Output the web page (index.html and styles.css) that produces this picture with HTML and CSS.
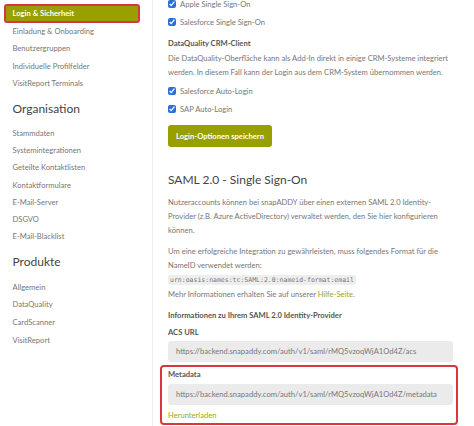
FILE: index.html
```html
<!DOCTYPE html>
<html lang="de">
<head>
    <meta charset="UTF-8">
    <meta name="viewport" content="width=device-width, initial-scale=1.0">
    <title>Einstellungen</title>
    <link rel="stylesheet" href="styles.css">
</head>
<body>
    <div class="page">
        <!-- Seitenleiste -->
        <nav class="sidebar">
            <a class="nav-item active" href="javascript:;">Login &amp; Sicherheit</a>
            <a class="nav-item" href="javascript:;">Einladung &amp; Onboarding</a>
            <a class="nav-item" href="javascript:;">Benutzergruppen</a>
            <a class="nav-item" href="javascript:;">Individuelle Profilfelder</a>
            <a class="nav-item" href="javascript:;">VisitReport Terminals</a>

            <h2 class="nav-title">Organisation</h2>
            <a class="nav-item" href="javascript:;">Stammdaten</a>
            <a class="nav-item" href="javascript:;">Systemintegrationen</a>
            <a class="nav-item" href="javascript:;">Geteilte Kontaktlisten</a>
            <a class="nav-item" href="javascript:;">Kontaktformulare</a>
            <a class="nav-item" href="javascript:;">E-Mail-Server</a>
            <a class="nav-item" href="javascript:;">DSGVO</a>
            <a class="nav-item" href="javascript:;">E-Mail-Blacklist</a>

            <h2 class="nav-title products">Produkte</h2>
            <a class="nav-item wide" href="javascript:;">Allgemein</a>
            <a class="nav-item wide" href="javascript:;">DataQuality</a>
            <a class="nav-item wide" href="javascript:;">CardScanner</a>
            <a class="nav-item wide" href="javascript:;">VisitReport</a>
        </nav>

        <!-- Inhalt -->
        <main class="content">
            <label class="check-row"><input type="checkbox" checked> Apple Single Sign-On</label>
            <label class="check-row"><input type="checkbox" checked> Salesforce Single Sign-On</label>

            <div class="label crm-label">DataQuality CRM-Client</div>
            <p class="text">Die DataQuality-Oberfläche kann als Add-In direkt in einige CRM-Systeme integriert werden. In diesem Fall kann der Login aus dem CRM-System übernommen werden.</p>

            <label class="check-row auto-first"><input type="checkbox" checked> Salesforce Auto-Login</label>
            <label class="check-row"><input type="checkbox" checked> SAP Auto-Login</label>

            <button class="btn">Login-Optionen speichern</button>

            <h2 class="section-title">SAML 2.0 - Single Sign-On</h2>
            <p class="text intro">Nutzeraccounts können bei snapADDY über einen externen SAML 2.0 Identity-Provider (z.B. Azure ActiveDirectory) verwaltet werden, den Sie hier konfigurieren können.</p>
            <p class="text format">Um eine erfolgreiche Integration zu gewährleisten, muss folgendes Format für die NameID verwendet werden:<br><code>urn:oasis:names:tc:SAML:2.0:nameid-format:email</code><br>Mehr Informationen erhalten Sie auf unserer <a href="javascript:;">Hilfe-Seite</a>.</p>

            <div class="label idp-label">Informationen zu Ihrem SAML 2.0 Identity-Provider</div>
            <div class="label field-label">ACS URL</div>
            <div class="field">https://backend.snapaddy.com/auth/v1/saml/rMQ5vzoqWjA1Od4Z/acs</div>

            <div class="marked">
                <div class="label">Metadata</div>
                <div class="field">https://backend.snapaddy.com/auth/v1/saml/rMQ5vzoqWjA1Od4Z/metadata</div>
                <a class="download" href="javascript:;">Herunterladen</a>
            </div>
        </main>
    </div>
</body>
</html>
```

FILE: styles.css
```css
*{
    margin: 0;
    padding: 0;
    box-sizing: border-box;
}
body{
    font-family: Lato, "Noto Sans", sans-serif;
    font-size: 7.6px;
    color: #777;
    background-color: #fff;
    overflow: hidden;
}
a{
    text-decoration: none;
}
.page{
    display: flex;
    height: 426px;
}

/* Seitenleiste */
.sidebar{
    width: 153px;
    flex-shrink: 0;
    border-right: 1px solid #eee;
    padding: 4px 12px 0 4px;
    display: flex;
    flex-direction: column;
}
.nav-item{
    display: block;
    line-height: 17.3px;
    padding-left: 8.5px;
    color: #777;
}
.nav-item.wide{
    line-height: 17.7px;
}
.nav-item.active{
    line-height: 15px;
    padding-left: 6.5px;
    color: #fff;
    font-weight: bold;
    background-color: #98a000;
    /* roter Rahmen um den aktiven Punkt */
    border: 2px solid #d8373f;
    border-radius: 3px;
}
.nav-title{
    font-size: 12px;
    font-weight: normal;
    color: #444;
    line-height: 18px;
    padding-left: 8.5px;
    margin: 7.5px 0 7px;
}
.nav-title.products{
    margin-bottom: 7.5px;
}

/* Inhalt */
.content{
    flex: 1;
    padding: 0 21px 0 15px;
    margin-top: -5px;
}
.check-row{
    display: flex;
    align-items: center;
    gap: 4px;
    height: 18px;
}
.check-row input{
    width: 8px;
    height: 8px;
    margin: 0;
    accent-color: #2a6fd8;
}
.label{
    font-weight: bold;
    color: #555;
    line-height: 14px;
}
.crm-label{
    margin: 5px 0 1px;
}
.text{
    line-height: 14px;
}
.auto-first{
    margin-top: 3px;
}
.btn{
    display: block;
    margin-top: 7px;
    height: 22px;
    padding: 0 8px;
    border: none;
    border-radius: 3px;
    background-color: #98a000;
    color: #fff;
    font-family: inherit;
    font-size: 7.6px;
    font-weight: bold;
}
.section-title{
    font-size: 12px;
    font-weight: normal;
    color: #444;
    line-height: 18px;
    margin-top: 24px;
}
.intro{
    margin-top: 6px;
}
.format{
    margin-top: 7px;
}
.format code{
    font-family: "DejaVu Sans Mono", monospace;
    font-size: 6.5px;
    background-color: #eee;
    color: #777;
    padding: 1px 2px;
    border-radius: 2px;
}
.format a,
.download{
    color: #a0a614;
}
.idp-label{
    margin-top: 7px;
}
.field-label{
    margin-top: 3px;
}
.field{
    margin-top: 2px;
    height: 21px;
    line-height: 21px;
    padding-left: 8px;
    background-color: #ebebeb;
    border-radius: 3px;
    white-space: nowrap;
    overflow: hidden;
}
/* markierter Bereich */
.marked{
    margin: 3px -5px 0 -8px;
    padding: 0 3px 1px 6px;
    border: 2px solid #d8373f;
    border-radius: 4px;
}
.marked .field{
    margin-top: 3px;
}
.download{
    display: block;
    line-height: 14px;
    margin-top: 3px;
}
```
